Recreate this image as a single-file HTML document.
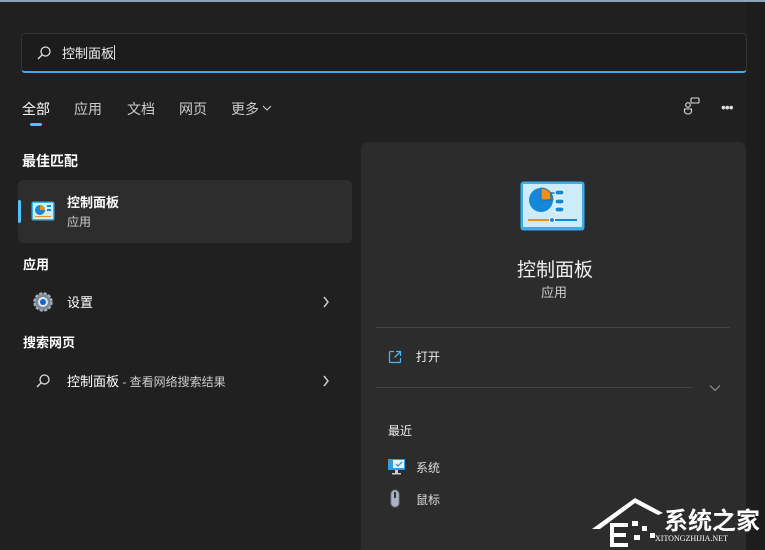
<!DOCTYPE html>
<html><head><meta charset="utf-8"><style>
*{margin:0;padding:0;box-sizing:border-box}
html,body{width:765px;height:550px;overflow:hidden}
body{background:#202020;font-family:"Liberation Sans","Noto Sans CJK SC",sans-serif;color:#fff;position:relative}
.a{position:absolute;white-space:nowrap}
.t{font-size:13px}
</style></head><body>
<div class="a" style="left:0;top:0;width:765px;height:2px;background:#8aa3b8"></div>
<div class="a" style="left:746px;top:2px;width:19px;height:548px;background:#1d1d1d"></div>
<div class="a" style="left:21px;top:33px;width:726px;height:40px;background:#1c1c1c;border:1px solid #343434;border-bottom:2px solid #3fa9e6;border-radius:4px"></div>
<svg class="a" style="left:36px;top:45px" width="16" height="16" viewBox="0 0 16 16"><circle cx="9.5" cy="6.5" r="4.5" fill="none" stroke="#ddd" stroke-width="1.3"/><path d="M6.2 9.8L2 14" stroke="#ddd" stroke-width="1.4"/></svg>
<div class="a t" style="left:62px;top:43px;color:#eee">控制面板<span style="display:inline-block;width:1px;height:15px;background:#ddd;vertical-align:-2px"></span></div>
<div class="a t" style="left:22px;top:99px;font-size:14px">全部</div>
<div class="a" style="left:30px;top:123px;width:12px;height:3px;border-radius:2px;background:#4cc2ff"></div>
<div class="a t" style="left:74px;top:99px;font-size:14px;color:#ccc">应用</div>
<div class="a t" style="left:127px;top:99px;font-size:14px;color:#ccc">文档</div>
<div class="a t" style="left:179px;top:99px;font-size:14px;color:#ccc">网页</div>
<div class="a t" style="left:231px;top:99px;font-size:14px;color:#ccc">更多</div>
<svg class="a" style="left:262px;top:104px" width="10" height="8"><path d="M1 2l4 4 4-4" fill="none" stroke="#ccc" stroke-width="1.1"/></svg>
<svg class="a" style="left:683px;top:97px" width="18" height="18" viewBox="0 0 18 18" fill="none" stroke="#ddd" stroke-width="1.1"><rect x="8" y="1" width="8" height="5" rx="1"/><circle cx="5" cy="8" r="2.3"/><path d="M1.5 12h7v2a3 3 0 0 1-3 3h-1a3 3 0 0 1-3-3z"/></svg>
<div class="a" style="left:721px;top:99px;font-size:14px;color:#ddd;letter-spacing:-1px">•••</div>
<div class="a t" style="left:22px;top:151px;font-weight:bold;font-size:14px">最佳匹配</div>
<div class="a" style="left:18px;top:180px;width:334px;height:63px;background:#2d2d2d;border-radius:5px"></div>
<div class="a" style="left:18px;top:200px;width:3px;height:23px;background:#4cc2ff;border-radius:2px"></div>
<svg class="a" style="left:31px;top:201px" width="24" height="20" viewBox="0 0 24 20"><rect x="0.5" y="0.5" width="23" height="19" rx="2" fill="#3ab0ea"/><rect x="2" y="2" width="20" height="16" fill="#cfeefd"/><circle cx="9" cy="9" r="5" fill="#1587d8"/><path d="M9 4v5h5a5 5 0 0 0-5-5z" fill="#f29111"/><rect x="16" y="4" width="4" height="2" fill="#1587d8"/><rect x="16" y="8" width="4" height="2" fill="#1587d8"/><rect x="4" y="15" width="16" height="1" fill="#f29111"/></svg>
<div class="a t" style="left:67px;top:192px;font-weight:bold">控制面板</div>
<div class="a" style="left:67px;top:213px;font-size:12px;color:#ccc">应用</div>
<div class="a t" style="left:23px;top:254px;font-weight:bold">应用</div>
<svg class="a" style="left:33px;top:292px" width="20" height="20" viewBox="0 0 20 20"><circle cx="10" cy="10" r="8.5" fill="#7c8896" stroke="#a0aab5" stroke-width="2.5" stroke-dasharray="3 1.5"/><circle cx="10" cy="10" r="5" fill="#dfe6ee"/><circle cx="10" cy="10" r="3" fill="#1466c8"/></svg>
<div class="a t" style="left:67px;top:292px">设置</div>
<svg class="a" style="left:322px;top:296px" width="8" height="12"><path d="M2 1l4 5-4 5" fill="none" stroke="#ccc" stroke-width="1.5"/></svg>
<div class="a t" style="left:23px;top:332px;font-weight:bold">搜索网页</div>
<svg class="a" style="left:35px;top:373px" width="16" height="16" viewBox="0 0 16 16"><circle cx="9.5" cy="6.5" r="4.5" fill="none" stroke="#ddd" stroke-width="1.3"/><path d="M6.2 9.8L2 14" stroke="#ddd" stroke-width="1.4"/></svg>
<div class="a t" style="left:67px;top:371px">控制面板<span style="color:#ccc;font-size:12px"> - 查看网络搜索结果</span></div>
<svg class="a" style="left:322px;top:375px" width="8" height="12"><path d="M2 1l4 5-4 5" fill="none" stroke="#ccc" stroke-width="1.5"/></svg>
<div class="a" style="left:361px;top:142px;width:385px;height:408px;background:#2c2c2c;border-radius:7px 7px 0 0"></div>
<svg class="a" style="left:520px;top:181px" width="65" height="50" viewBox="0 0 65 50"><rect x="0.5" y="0.5" width="64" height="49" rx="3" fill="#39aeea"/><rect x="3" y="3" width="59" height="43" rx="1" fill="#cdecfb"/><circle cx="21" cy="19" r="12" fill="#1587d8"/><path d="M21 7v12h12a12 12 0 0 0-12-12z" fill="#f29111" stroke="#1770b8" stroke-width="1"/><path d="M27 19h4v-7h4" fill="none" stroke="#1770b8" stroke-width="1.5"/><rect x="35" y="9" width="9" height="5" rx="2.5" fill="#1587d8" stroke="#fff" stroke-width="1"/><rect x="35" y="18" width="9" height="5" rx="2.5" fill="#1587d8" stroke="#fff" stroke-width="1"/><rect x="35" y="26" width="9" height="5" rx="2.5" fill="#1587d8" stroke="#fff" stroke-width="1"/><rect x="8" y="38" width="24" height="2" fill="#f29111"/><rect x="32" y="38" width="25" height="2" fill="#1587d8"/><circle cx="32" cy="39" r="2.5" fill="#1587d8" stroke="#fff" stroke-width="1"/></svg>
<div class="a" style="left:517px;top:255px;font-size:19px;color:#eee">控制面板</div>
<div class="a" style="left:541px;top:282px;font-size:13px;color:#ccc">应用</div>
<div class="a" style="left:376px;top:327px;width:354px;height:1px;background:#444"></div>
<svg class="a" style="left:388px;top:350px" width="14" height="14" viewBox="0 0 14 14" fill="none" stroke="#4cb3ee" stroke-width="1.3"><path d="M6 1.5H2.5a1 1 0 0 0-1 1v9a1 1 0 0 0 1 1h9a1 1 0 0 0 1-1V8"/><path d="M8 1.5h4.5V6M12.5 1.5L6.5 7.5"/></svg>
<div class="a t" style="left:416px;top:348px;color:#eee;font-size:12px">打开</div>
<div class="a" style="left:376px;top:387px;width:316px;height:1px;background:#444"></div>
<svg class="a" style="left:709px;top:384px" width="12" height="8"><path d="M1 1.5l5 5 5-5" fill="none" stroke="#999" stroke-width="1.1"/></svg>
<div class="a t" style="left:388px;top:422px;font-size:12px;color:#eee">最近</div>
<svg class="a" style="left:388px;top:459px" width="17" height="16" viewBox="0 0 17 16"><rect x="0" y="0" width="17" height="11" fill="#2b9ee6"/><rect x="5" y="1" width="11" height="8" fill="#e8f4fc"/><path d="M8 5l2 2 4-4" stroke="#2b9ee6" fill="none" stroke-width="1.3"/><rect x="7" y="11" width="3" height="3" fill="#ccc"/><rect x="4" y="14" width="9" height="1.5" fill="#ccc"/></svg>
<div class="a t" style="left:416px;top:459px;font-size:12px;color:#ddd">系统</div>
<svg class="a" style="left:390px;top:489px" width="10" height="19" viewBox="0 0 10 19"><rect x="0.7" y="0.7" width="8.6" height="17.6" rx="4.3" fill="#aab3bd" stroke="#556" stroke-width="1"/><rect x="4" y="3" width="2" height="6" fill="#334"/></svg>
<div class="a t" style="left:416px;top:491px;font-size:12px;color:#ddd">鼠标</div>
<div class="a" style="left:664px;top:501px;font-size:24px;font-weight:bold;color:#fff">系统之家</div>
<div class="a" style="left:655px;top:534px;font-size:8px;color:#fff;font-family:'Liberation Serif',serif">XITONGZHIJIA.NET</div>
<svg class="a" style="left:590px;top:493px" width="75" height="57" viewBox="0 0 75 57" fill="#fff"><path d="M2 36L45 5l28 15-5 2-23-12L10 36z"/><path d="M20 30h18v4H24v6h12v4H24v6h14v4H20z"/><rect x="42" y="28" width="6" height="5"/><rect x="52" y="33" width="5" height="5"/><rect x="44" y="42" width="6" height="5"/><rect x="60" y="40" width="5" height="5"/></svg>
</body></html>
